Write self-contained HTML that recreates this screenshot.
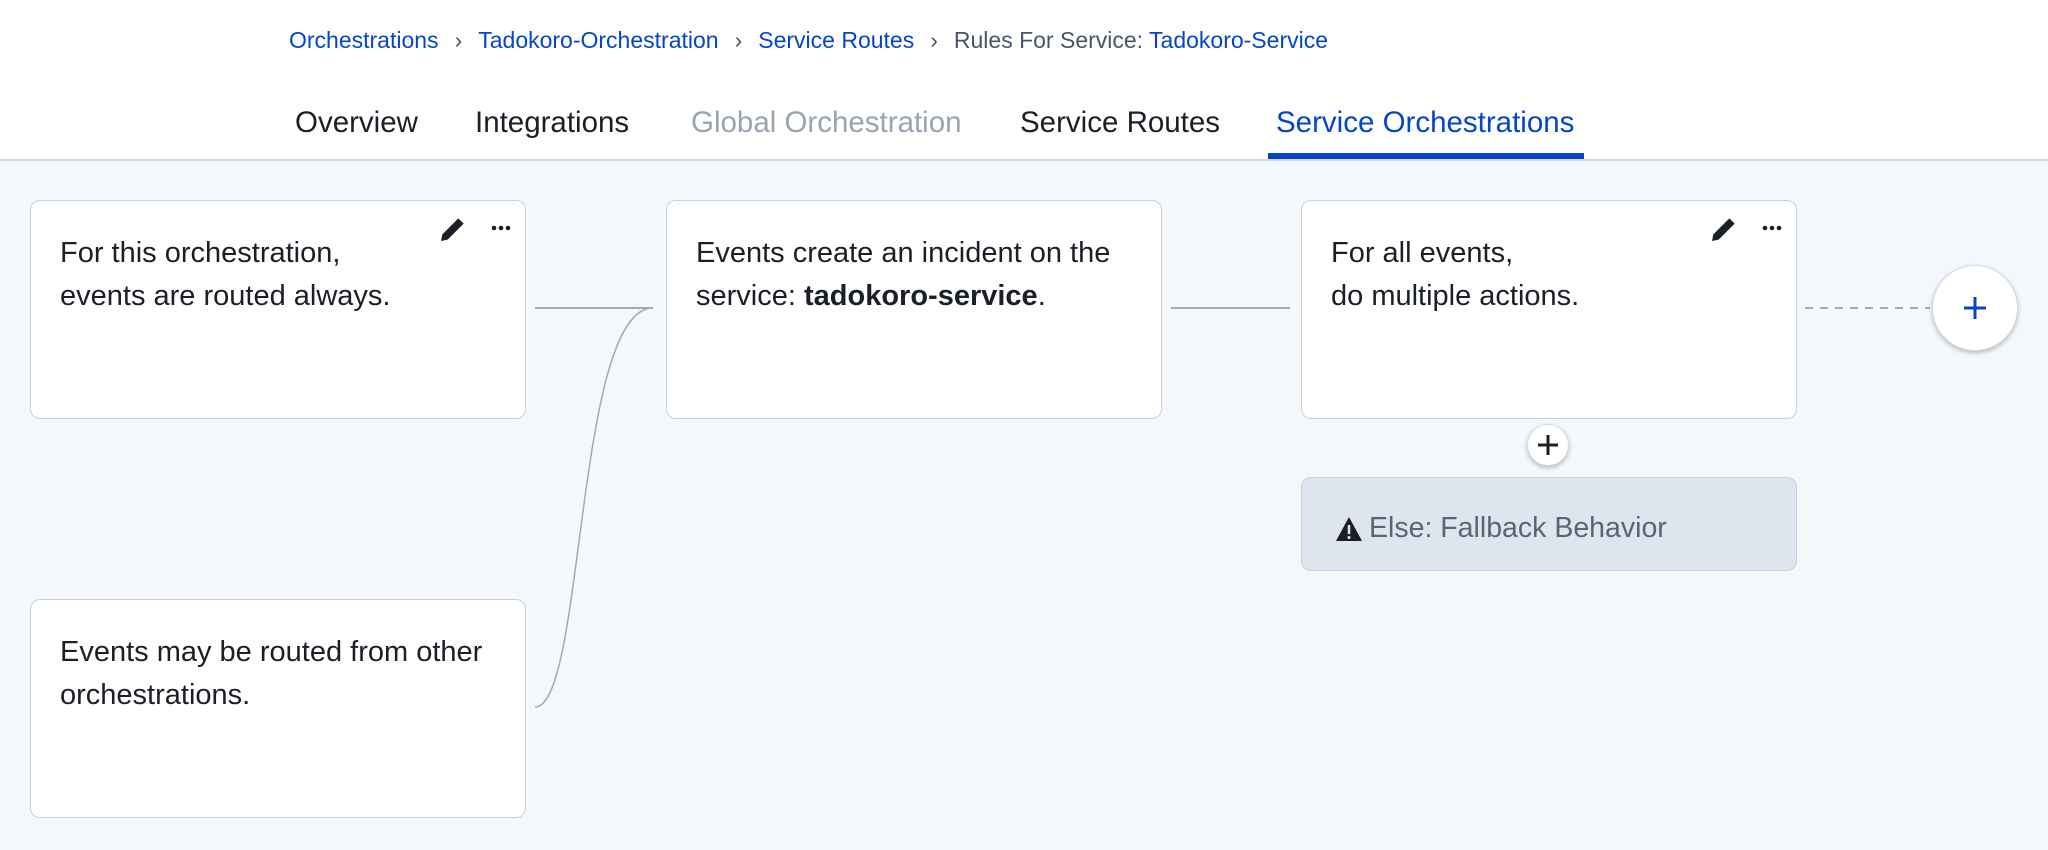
<!DOCTYPE html>
<html><head><style>
body{margin:0;width:2048px;height:850px;overflow:hidden;font-family:"Liberation Sans",sans-serif;background:#f5f8fb;position:relative}
.hdr{position:absolute;left:0;top:0;width:2048px;height:159px;background:#fff;border-bottom:2px solid #d3dae4}
.bc{position:absolute;top:27px;left:289px;font-size:23px;color:#4c5563;white-space:nowrap}
.bc a{color:#0546c8;text-decoration:none}
.bc .s{margin:0 16px;color:#4c5563}
.tab{position:absolute;top:106px;font-size:29.5px;color:#1b1f26;white-space:nowrap}
.ul{position:absolute;left:1268px;top:153px;width:316px;height:6px;background:#0546c8}
.card{position:absolute;background:#fff;border:1.5px solid #c7d0dd;border-radius:10px;box-sizing:border-box}
.card p{margin:0;position:absolute;left:29px;top:31px;font-size:29px;line-height:43px;color:#1b1f26;white-space:nowrap}
.ico{position:absolute;top:12px}
svg.l{position:absolute;left:0;top:0}
.plus{position:absolute;border-radius:50%;background:#fff;box-shadow:0 2px 5px rgba(0,0,0,.25);border:1px solid #d3dae4;box-sizing:border-box}
.else{position:absolute;left:1301px;top:477px;width:496px;height:94px;background:#dfe5ee;border:1.5px solid #c7d0dd;border-radius:10px;box-sizing:border-box}
</style></head><body>
<div class="hdr">
<div class="bc"><a>Orchestrations</a><span class="s">›</span><a>Tadokoro-Orchestration</a><span class="s">›</span><a>Service Routes</a><span class="s">›</span>Rules For Service: <a>Tadokoro-Service</a></div>
<div class="tab" style="left:295px">Overview</div>
<div class="tab" style="left:475px">Integrations</div>
<div class="tab" style="left:691px;color:#98a3b3">Global Orchestration</div>
<div class="tab" style="left:1020px">Service Routes</div>
<div class="tab" style="left:1276px;color:#0546c8">Service Orchestrations</div>
<div class="ul"></div>
</div>
<svg class="l" width="2048" height="850">
<path d="M535 308 H653" stroke="#a3a9b2" stroke-width="2" fill="none"/>
<path d="M535 707 C585 707 575 308 653 308" stroke="#a3a9b2" stroke-width="1.5" fill="none"/>
<path d="M1171 308 H1290" stroke="#a3a9b2" stroke-width="2" fill="none"/>
<path d="M1805 308 H1930" stroke="#a3a9b2" stroke-width="2" stroke-dasharray="8 7" fill="none"/>
</svg>
<div class="card" style="left:30px;top:200px;width:496px;height:219px"><p>For this orchestration,<br>events are routed always.</p>
<svg class="ico" style="left:406px" width="32" height="32" viewBox="0 0 24 24"><path d="M3 21l1-5L16 4l4 4L8 20z" fill="#1b1f26"/></svg>
<svg class="ico" style="left:460px;top:24px" width="20" height="6"><circle cx="3" cy="3" r="2.3" fill="#1b1f26"/><circle cx="10" cy="3" r="2.3" fill="#1b1f26"/><circle cx="17" cy="3" r="2.3" fill="#1b1f26"/></svg></div>
<div class="card" style="left:30px;top:599px;width:496px;height:219px"><p>Events may be routed from other<br>orchestrations.</p></div>
<div class="card" style="left:666px;top:200px;width:496px;height:219px"><p>Events create an incident on the<br>service: <b>tadokoro-service</b>.</p></div>
<div class="card" style="left:1301px;top:200px;width:496px;height:219px"><p>For all events,<br>do multiple actions.</p>
<svg class="ico" style="left:406px" width="32" height="32" viewBox="0 0 24 24"><path d="M3 21l1-5L16 4l4 4L8 20z" fill="#1b1f26"/></svg>
<svg class="ico" style="left:460px;top:24px" width="20" height="6"><circle cx="3" cy="3" r="2.3" fill="#1b1f26"/><circle cx="10" cy="3" r="2.3" fill="#1b1f26"/><circle cx="17" cy="3" r="2.3" fill="#1b1f26"/></svg></div>
<div class="plus" style="left:1932px;top:265px;width:86px;height:86px"><svg width="84" height="84"><path d="M42 31V53M31 42H53" stroke="#0546c8" stroke-width="3"/></svg></div>
<div class="plus" style="left:1527px;top:424px;width:42px;height:42px"><svg width="40" height="40"><path d="M20 10V30M10 20H30" stroke="#1b1f26" stroke-width="3"/></svg></div>
<div class="else"><svg style="position:absolute;left:33px;top:38px" width="28" height="26" viewBox="0 0 28 26"><path d="M14 1L27 25H1z" fill="#1b1f26"/><path d="M14 9V18" stroke="#dfe5ee" stroke-width="2.5"/><circle cx="14" cy="21.5" r="1.5" fill="#dfe5ee"/></svg>
<span style="position:absolute;left:67px;top:34px;font-size:28.5px;color:#5a6574;white-space:nowrap">Else: Fallback Behavior</span></div>
</body></html>
